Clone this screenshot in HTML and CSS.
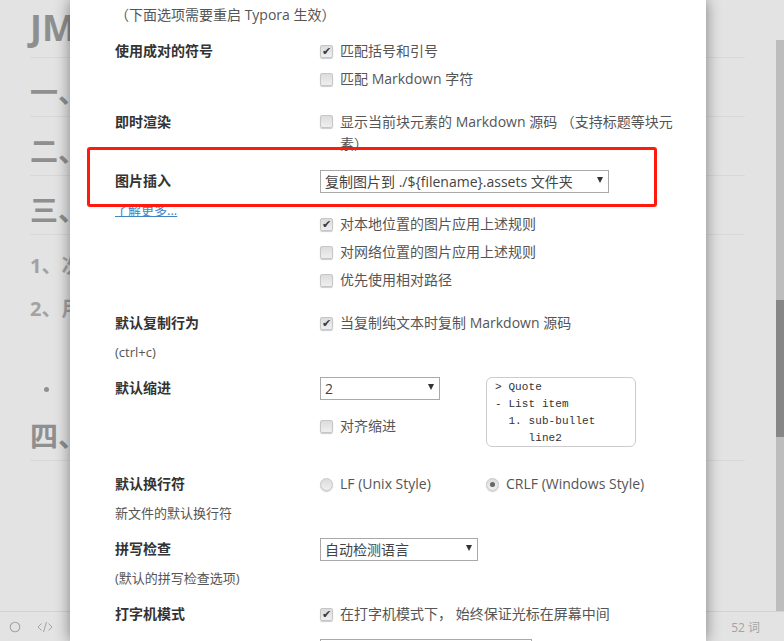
FILE: index.html
```html
<!DOCTYPE html>
<html lang="zh-CN">
<head>
  <meta charset="UTF-8">
  <title>Typora 偏好设置</title>
  <link rel="stylesheet" href="styles.css">
</head>
<body>
  <div class="app">
    <main class="write">
      <h1>JMeter</h1>
      <h2>一、简介</h2>
      <h2>二、安装</h2>
      <h2>三、使用</h2>
      <h3 class="first">1、次要</h3>
      <h3>2、用法</h3>
      <ul>
        <li>&nbsp;</li>
      </ul>
      <h2>四、总结</h2>
      <div class="scrollbar"><div class="thumb"></div></div>
    </main>
    <footer class="status">
      <svg class="status-icon" width="12" height="12" viewBox="0 0 12 12"><circle cx="6" cy="6" r="4.8" fill="none" stroke="#a3a3a3" stroke-width="1.1"/></svg>
      <svg class="status-icon code" width="16" height="12" viewBox="0 0 16 12"><path d="M4.5 2.5 1 6l3.5 3.5M11.500 2.500 15 6l-3.500 3.500M9.500 1 6.500 11" fill="none" stroke="#a3a3a3" stroke-width="1"/></svg>
      <span class="count">52 词</span>
    </footer>
  </div>

  <section class="dialog">
    <p class="note">（下面选项需要重启 Typora 生效）</p>

    <div class="row">
      <div class="label">使用成对的符号</div>
      <div class="field">
        <label class="option"><input type="checkbox" checked><span>匹配括号和引号</span></label>
        <label class="option"><input type="checkbox"><span>匹配 Markdown 字符</span></label>
      </div>
    </div>

    <div class="row row-tight">
      <div class="label">即时渲染</div>
      <div class="field">
        <label class="option option-wrap"><input type="checkbox"><span>显示当前块元素的 Markdown 源码 （支持标题等块元素）</span></label>
      </div>
    </div>

    <div class="row">
      <div class="label">图片插入<a class="more" href="#">了解更多...</a></div>
      <div class="field">
        <div class="select select-image"><select><option>复制图片到 ./${filename}.assets 文件夹</option></select></div>
        <label class="option"><input type="checkbox" checked><span>对本地位置的图片应用上述规则</span></label>
        <label class="option"><input type="checkbox"><span>对网络位置的图片应用上述规则</span></label>
        <label class="option"><input type="checkbox"><span>优先使用相对路径</span></label>
      </div>
    </div>

    <div class="row">
      <div class="label">默认复制行为<div class="hint">(ctrl+c)</div></div>
      <div class="field">
        <label class="option"><input type="checkbox" checked><span>当复制纯文本时复制 Markdown 源码</span></label>
      </div>
    </div>

    <div class="row row-indent">
      <div class="label">默认缩进</div>
      <div class="field field-indent">
        <div class="indent-left">
          <div class="select select-indent"><select><option>2</option></select></div>
          <label class="option"><input type="checkbox"><span>对齐缩进</span></label>
        </div>
        <pre class="preview">&gt; Quote
- List item
  1. sub-bullet
     line2</pre>
      </div>
    </div>

    <div class="row">
      <div class="label">默认换行符<div class="hint">新文件的默认换行符</div></div>
      <div class="field field-radios">
        <label class="option radio-option"><input type="radio" name="eol"><span>LF (Unix Style)</span></label>
        <label class="option"><input type="radio" name="eol" checked><span>CRLF (Windows Style)</span></label>
      </div>
    </div>

    <div class="row">
      <div class="label">拼写检查<div class="hint">(默认的拼写检查选项)</div></div>
      <div class="field">
        <div class="select select-spell"><select><option>自动检测语言</option></select></div>
      </div>
    </div>

    <div class="row">
      <div class="label">打字机模式</div>
      <div class="field">
        <label class="option"><input type="checkbox" checked><span>在打字机模式下， 始终保证光标在屏幕中间</span></label>
        <div class="select select-last"><select><option>默认</option></select></div>
      </div>
    </div>
  </section>

  <div class="highlight"></div>
</body>
</html>
```

FILE: styles.css
```css
html, body {
  height: 100%;
  margin: 0;
  overflow: hidden;
}
body {
  position: relative;
  font-family: "Open Sans", "Noto Sans CJK SC", sans-serif;
  font-size: 14px;
  background: #e3e3e3;
}

/* editor behind the dialog */
.app {
  display: flex;
  flex-direction: column;
  height: 100vh;
}
.write {
  position: relative;
  flex: 1;
  padding: 3px 39px 0 30px;
  color: #8f8f8f;
  overflow: hidden;
}
.write h1 {
  margin: 0;
  height: 54px;
  font-size: 36px;
  line-height: 50px;
  border-bottom: 1px solid #d8d8d8;
}
.write h2 {
  margin: 15px 0 0;
  padding-bottom: 5px;
  font-size: 28px;
  line-height: 38px;
  border-bottom: 1px solid #d8d8d8;
}
.write h3 {
  margin: 17px 0 0;
  font-size: 20px;
  line-height: 26px;
  color: #a2a2a2;
}
.write h3.first {
  margin-top: 18px;
}
.write ul {
  margin: 55px 0 -1px;
  padding-left: 31px;
  line-height: 26px;
}
.scrollbar {
  position: absolute;
  top: 40px;
  right: 0;
  bottom: 0;
  width: 8px;
  background: #bdbdbd;
}
.thumb {
  margin-top: 260px;
  height: 137px;
  background: #868686;
}
.status {
  display: flex;
  align-items: center;
  gap: 16px;
  height: 29px;
  padding: 0 24px 0 9px;
  border-top: 1px solid #d2d2d2;
  color: #a3a3a3;
  font-size: 12px;
}
.count {
  margin-left: auto;
}

/* dialog */
.dialog {
  position: absolute;
  top: 0;
  left: 70px;
  bottom: 0;
  width: 636px;
  box-sizing: border-box;
  padding: 4px 30px 0 45px;
  background: #fff;
  color: #555;
  box-shadow: 0 0 14px rgba(0, 0, 0, 0.45);
  overflow: hidden;
}
.note {
  margin: 0 0 11px;
  line-height: 22px;
}
.row {
  display: grid;
  grid-template-columns: 205px 1fr;
  margin-bottom: 15px;
}
.row-tight {
  margin-bottom: 9px;
}
.row-indent {
  margin-bottom: 23px;
}
.label {
  padding-top: 3px;
  line-height: 22px;
  font-weight: 600;
  color: #333;
}
.hint {
  margin: 7px 0 -4px;
  font-weight: 400;
  color: #555;
  font-size: 13px;
}
.more {
  display: block;
  margin-top: 7px;
  font-weight: 400;
  font-size: 13px;
  color: #4183c4;
}
.option {
  display: flex;
  align-items: center;
  height: 28px;
}
.option span {
  margin-bottom: 2px;
}
.option-wrap {
  height: auto;
  align-items: flex-start;
  padding: 3px 0;
  line-height: 22px;
}
.option-wrap span {
  margin-bottom: 0;
}

input[type="checkbox"],
input[type="radio"] {
  appearance: none;
  flex: none;
  position: relative;
  width: 13px;
  height: 13px;
  margin: 0 7px 0 0;
  border: 1px solid #c6c6c6;
  border-radius: 2px;
  background: linear-gradient(#dcdcdc, #efefef);
  box-shadow: 0 1px 1px rgba(0, 0, 0, 0.2);
}
input[type="radio"] {
  border-radius: 50%;
}
.option-wrap input[type="checkbox"] {
  margin-top: 4px;
}
input[type="checkbox"]:checked::after {
  content: "✔";
  position: absolute;
  top: -1px;
  left: 1px;
  font: 11px/13px "DejaVu Sans", sans-serif;
  color: #3a3a3a;
}
input[type="radio"]:checked::after {
  content: "";
  position: absolute;
  top: 3px;
  left: 3px;
  width: 5px;
  height: 5px;
  border-radius: 50%;
  background: #666;
}

.select {
  position: relative;
  margin-top: 3px;
}
.select::after {
  content: "";
  position: absolute;
  top: 7px;
  right: 6px;
  border-left: 3.5px solid transparent;
  border-right: 3.5px solid transparent;
  border-top: 6px solid #333;
}
.select select {
  appearance: none;
  display: block;
  width: 100%;
  height: 23px;
  padding: 0 0 0 4px;
  border: 1px solid #a9a9a9;
  border-radius: 0;
  background: #fff;
  color: #444;
  font: inherit;
  line-height: 21px;
}
.select-image {
  width: 289px;
  margin-bottom: 17px;
}
.select-indent {
  width: 120px;
  margin-bottom: 12px;
}
.select-spell {
  width: 158px;
}
.select-last {
  width: 212px;
  margin-top: 11px;
}

.field-indent {
  display: flex;
  gap: 46px;
}
.preview {
  width: 150px;
  height: 70px;
  box-sizing: border-box;
  margin: 3px 0 0;
  padding: 1px 8px 0;
  border: 1px solid #ccc;
  border-radius: 6px;
  font: 11px/17px "Liberation Mono", monospace;
  letter-spacing: 0.1px;
  color: #333;
}
.field-radios {
  display: flex;
}
.radio-option {
  width: 166px;
}

/* red annotation box */
.highlight {
  position: absolute;
  top: 147px;
  left: 87px;
  width: 564px;
  height: 54px;
  border: 3px solid #ff1a0d;
  border-radius: 3px;
}
```
